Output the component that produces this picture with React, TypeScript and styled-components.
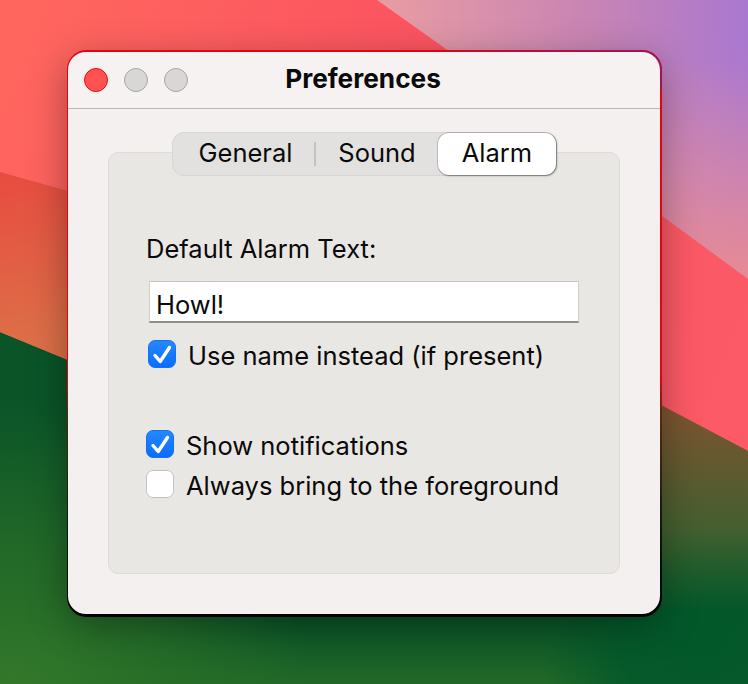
import React from "react";
import styled, { createGlobalStyle } from "styled-components";

const Global = createGlobalStyle`
  html, body { margin: 0; padding: 0; width: 748px; height: 684px; overflow: hidden; }
  * { box-sizing: border-box; }
`;

const Desktop = styled.div`
  position: relative;
  width: 748px;
  height: 684px;
  overflow: hidden;
  padding: 52px 88px 70px 68px;
  font-family: "Inter", "Liberation Sans", Arial, sans-serif;
  color: #0a0a0a;
  background: #15602c;
`;

const Wallpaper = styled.svg`
  position: absolute;
  inset: 0;
  width: 748px;
  height: 684px;
`;

const Window = styled.div`
  position: relative;
  width: 592px;
  height: 562px;
  display: flex;
  flex-direction: column;
  background: #f4f0f0;
  border-radius: 18px;
  box-shadow: 0 10px 38px rgba(0, 0, 0, 0.36);

  &::before {
    content: "";
    position: absolute;
    inset: -2px -1.5px -2.5px -1.5px;
    border-radius: 19.5px;
    background:
      linear-gradient(to right, transparent 55%, #a5124e 92%) top / 100% 40px no-repeat,
      linear-gradient(to bottom, #e00510 0%, #e00510 58%, #5a2a10 64%, #0a1a0a 85%, #000 100%);
  }
`;

const TitleBar = styled.header`
  position: relative;
  height: 57px;
  flex: none;
  display: flex;
  align-items: center;
  justify-content: center;
  border-bottom: 1px solid #b9b5b4;
  background: #f6f2f2;
  border-radius: 18px 18px 0 0;
`;

const Lights = styled.div`
  position: absolute;
  left: 16px;
  top: 16px;
  display: flex;
  gap: 16px;
`;

const Light = styled.span<{ $red?: boolean }>`
  width: 24px;
  height: 24px;
  border-radius: 50%;
  background: ${(p) => (p.$red ? "#fc5252" : "#d9d6d6")};
  border: 1px solid ${(p) => (p.$red ? "#ee0a0a" : "#a8a5a5")};
`;

const Title = styled.h1`
  margin: 0;
  font-size: 26.2px;
  font-weight: 700;
  line-height: 30px;
  letter-spacing: 0;
  transform: translate(-1px, -1px);
`;

const Body = styled.main`
  position: relative;
  flex: 1;
  padding: 43px 40px 40px;
  background: #f4f0f0;
  border-radius: 0 0 18px 18px;
`;

const Panel = styled.section`
  height: 100%;
  background: #e9e7e4;
  border: 1px solid #dedbd9;
  border-radius: 10px;
  padding: 81px 37px 0;
  font-size: 25.5px;
`;

const Tabs = styled.nav`
  position: absolute;
  left: 104px;
  top: 23px;
  width: 385px;
  height: 44px;
  display: flex;
  align-items: center;
  background: #e3e1e0;
  border: 1px solid #d8d5d4;
  border-radius: 12px;
  font-size: 25.5px;
`;

const Tab = styled.span<{ $w: number; $offset?: number; $active?: boolean }>`
  position: relative;
  flex: none;
  width: ${(p) => p.$w}px;
  height: ${(p) => (p.$active ? 42 : 30)}px;
  padding-left: ${(p) => p.$offset ?? 0}px;
  padding-bottom: 4px;
  display: flex;
  align-items: center;
  justify-content: center;
  ${(p) =>
    p.$active
      ? `background:#fff;border-radius:11px;box-shadow:0 0 0 1px rgba(0,0,0,.16),1px 1px 2px rgba(0,0,0,.35);`
      : ""}
`;

const Divider = styled.span`
  flex: none;
  width: 2px;
  height: 24px;
  background: #c4c2c0;
`;

const FieldLabel = styled.div`
  line-height: 30px;
`;

const Input = styled.div`
  width: 430px;
  height: 42px;
  margin: 17px 0 0 3px;
  padding: 6px 6px 0;
  display: flex;
  align-items: center;
  background: #fff;
  border-top: 1px solid #c9c6c4;
  border-left: 1px solid #d0cdcb;
  border-right: 1px solid #d0cdcb;
  border-bottom: 2px solid #8f8d8c;
`;

const CheckRow = styled.label<{ $mt: number; $ml?: number }>`
  display: flex;
  align-items: center;
  height: 30px;
  gap: 12px;
  margin-top: ${(p) => p.$mt}px;
  margin-left: ${(p) => p.$ml ?? 0}px;
`;

const RowText = styled.span`
  padding-top: 2px;
  white-space: nowrap;
`;

const Box = styled.span<{ $on?: boolean }>`
  flex: none;
  width: 28px;
  height: 28px;
  border-radius: 7px;
  display: flex;
  align-items: center;
  justify-content: center;
  background: ${(p) => (p.$on ? "linear-gradient(#2488ff,#0a6cff)" : "#fff")};
  border: 1px solid ${(p) => (p.$on ? "#1670f0" : "#c5c3c1")};
`;

const Check = () => (
  <svg width="26" height="26" viewBox="0 0 26 26" fill="none">
    <path d="M6 14.5 L11.2 20.5 L20.5 6.5" stroke="#fff" strokeWidth="3.4" strokeLinecap="round" strokeLinejoin="round" />
  </svg>
);

export default function App() {
  return (
    <Desktop>
      <Global />
      <Wallpaper viewBox="0 0 748 684" aria-hidden>
        <defs>
          <linearGradient id="red" gradientUnits="userSpaceOnUse" x1="0" y1="100" x2="748" y2="400">
            <stop offset="0" stopColor="#ff665e" />
            <stop offset="0.45" stopColor="#fb5460" />
            <stop offset="1" stopColor="#fb5a66" />
          </linearGradient>
          <linearGradient id="band" gradientUnits="userSpaceOnUse" x1="0" y1="175" x2="30" y2="345">
            <stop offset="0" stopColor="#e84c40" />
            <stop offset="1" stopColor="#dc7048" />
          </linearGradient>
          <linearGradient id="pink" gradientUnits="userSpaceOnUse" x1="400" y1="40" x2="748" y2="20">
            <stop offset="0" stopColor="#e69aa4" />
            <stop offset="0.55" stopColor="#c884b4" />
            <stop offset="1" stopColor="#aa78d0" />
          </linearGradient>
          <linearGradient id="pinkLow" gradientUnits="userSpaceOnUse" x1="748" y1="60" x2="748" y2="280">
            <stop offset="0" stopColor="#e89098" stopOpacity="0" />
            <stop offset="1" stopColor="#e88a94" stopOpacity="1" />
          </linearGradient>
          <radialGradient id="lightGreen" gradientUnits="userSpaceOnUse" cx="10" cy="700" r="300">
            <stop offset="0" stopColor="#34792a" />
            <stop offset="0.5" stopColor="#2a7028" stopOpacity="0.75" />
            <stop offset="1" stopColor="#2a7028" stopOpacity="0" />
          </radialGradient>
          <linearGradient id="bottomGlow" gradientUnits="userSpaceOnUse" x1="0" y1="620" x2="0" y2="700">
            <stop offset="0" stopColor="#2f7428" stopOpacity="0" />
            <stop offset="1" stopColor="#2f7428" stopOpacity="0.8" />
          </linearGradient>
          <radialGradient id="darkGreen" gradientUnits="userSpaceOnUse" cx="700" cy="640" r="160">
            <stop offset="0" stopColor="#03582a" />
            <stop offset="0.5" stopColor="#03582a" stopOpacity="0.9" />
            <stop offset="1" stopColor="#03582a" stopOpacity="0" />
          </radialGradient>
          <linearGradient id="brown" gradientUnits="userSpaceOnUse" x1="700" y1="410" x2="700" y2="610">
            <stop offset="0" stopColor="#7e5430" />
            <stop offset="0.6" stopColor="#4a6030" stopOpacity="0.9" />
            <stop offset="1" stopColor="#3f622c" stopOpacity="0" />
          </linearGradient>
        </defs>
        <rect width="748" height="684" fill="#0a5428" />
        <rect width="748" height="684" fill="url(#bottomGlow)" />
        <rect width="748" height="684" fill="url(#lightGreen)" />
        <rect width="748" height="684" fill="url(#darkGreen)" />
        <polygon points="600,372 748,451 748,640 600,640" fill="url(#brown)" />
        <polygon points="0,0 748,0 748,451 661,405 300,460 68,360 0,332" fill="url(#red)" />
        <polygon points="0,172 68,191 220,235 220,425 68,360 0,332" fill="url(#band)" />
        <polygon points="377,0 748,0 748,279 661,215 453,54" fill="url(#pink)" />
        <polygon points="377,0 748,0 748,279 661,215 453,54" fill="url(#pinkLow)" />
      </Wallpaper>
      <Window>
        <TitleBar>
          <Lights>
            <Light $red />
            <Light />
            <Light />
          </Lights>
          <Title>Preferences</Title>
        </TitleBar>
        <Body>
          <Tabs>
            <Tab $w={141} $offset={4}>General</Tab>
            <Divider />
            <Tab $w={122}>Sound</Tab>
            <Tab $w={118} $active>Alarm</Tab>
          </Tabs>
          <Panel>
            <FieldLabel>Default Alarm Text:</FieldLabel>
            <Input>Howl!</Input>
            <CheckRow $mt={16} $ml={2}>
              <Box $on><Check /></Box>
              <RowText>Use name instead (if present)</RowText>
            </CheckRow>
            <CheckRow $mt={60}>
              <Box $on><Check /></Box>
              <RowText>Show notifications</RowText>
            </CheckRow>
            <CheckRow $mt={10}>
              <Box />
              <RowText>Always bring to the foreground</RowText>
            </CheckRow>
          </Panel>
        </Body>
      </Window>
    </Desktop>
  );
}
